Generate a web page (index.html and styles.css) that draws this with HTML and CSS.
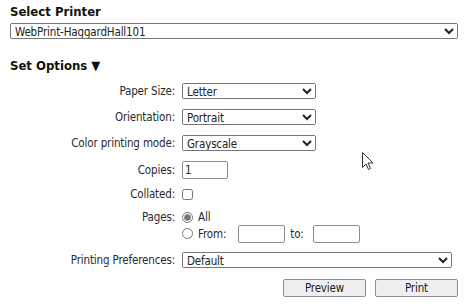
FILE: index.html
```html
<!DOCTYPE html>
<html lang="en">
<head>
  <meta charset="UTF-8">
  <title>WebPrint</title>
  <link rel="stylesheet" href="styles.css">
</head>
<body>
  <h2 class="section-title">Select Printer</h2>
  <select class="printer-select">
    <option>WebPrint-HaggardHall101</option>
  </select>

  <h2 class="section-title options-title">Set Options &#9660;</h2>

  <div class="options">
    <label class="opt-label">Paper Size:</label>
    <div class="opt-field">
      <select class="small-select">
        <option>Letter</option>
        <option>Legal</option>
      </select>
    </div>

    <label class="opt-label">Orientation:</label>
    <div class="opt-field">
      <select class="small-select">
        <option>Portrait</option>
        <option>Landscape</option>
      </select>
    </div>

    <label class="opt-label">Color printing mode:</label>
    <div class="opt-field">
      <select class="small-select">
        <option>Grayscale</option>
        <option>Color</option>
      </select>
    </div>

    <label class="opt-label">Copies:</label>
    <div class="opt-field">
      <input type="text" class="copies" value="1">
    </div>

    <label class="opt-label">Collated:</label>
    <div class="opt-field">
      <input type="checkbox" class="check">
    </div>

    <label class="opt-label pages-label">Pages:</label>
    <div class="opt-field pages">
      <div class="page-line first">
        <input type="radio" name="pages" class="radio" checked> <span>All</span>
      </div>
      <div class="page-line">
        <input type="radio" name="pages" class="radio"> <span>From:</span>
        <input type="text" class="range">
        <span class="to">to:</span>
        <input type="text" class="range to-range">
      </div>
    </div>

    <label class="opt-label">Printing Preferences:</label>
    <div class="opt-field">
      <select class="wide-select">
        <option>Default</option>
      </select>
    </div>
  </div>

  <div class="actions">
    <button class="btn">Preview</button>
    <button class="btn">Print</button>
  </div>

  <svg class="cursor" width="12" height="19" viewBox="0 0 12 19">
    <path d="M0.5 0.5 L0.5 15.5 L4 12 L6.5 17.5 L8.5 16.5 L6 11 L11 11 Z" fill="#fff" stroke="#333" stroke-width="1"/>
  </svg>
</body>
</html>
```

FILE: styles.css
```css
body {
  margin: 0;
  padding: 4px 16px 0 10px;
  font-family: "DejaVu Sans Condensed", Tahoma, "DejaVu Sans", sans-serif;
  font-stretch: condensed;
  font-size: 11.5px;
  letter-spacing: -0.15px;
  color: #2a2a2a;
  background: #fff;
  position: relative;
  height: 300px;
}

.section-title {
  font-size: 13px;
  line-height: 15px;
  font-weight: bold;
  letter-spacing: 0;
  margin: 0 0 4px;
  color: #111;
}

.options-title {
  margin-top: 19px;
  margin-bottom: 10px;
}

select, input, button {
  font-family: inherit;
  font-stretch: condensed;
  font-size: 11.5px;
  letter-spacing: -0.15px;
  color: #222;
  accent-color: #777;
}

.printer-select {
  display: block;
  width: 448px;
  height: 16px;
}

.options {
  display: grid;
  grid-template-columns: 165px auto;
  grid-template-rows: 16px 16px 16px 18px 10px 33px 16px;
  column-gap: 7px;
  row-gap: 10px;
}

.opt-label {
  text-align: right;
  display: flex;
  align-items: center;
  justify-content: flex-end;
}

.opt-field {
  display: flex;
  align-items: center;
}

.small-select {
  width: 134px;
  height: 16px;
}

.wide-select {
  width: 270px;
  height: 16px;
}

.copies {
  width: 40px;
  height: 14px;
  padding: 1px 2px;
  margin: 0;
  border: 1px solid #8d8d8d;
  border-radius: 2px;
}

.check {
  margin: 0;
  width: 11px;
  height: 11px;
}

.pages {
  flex-direction: column;
  align-items: flex-start;
}

.pages-label {
  align-items: flex-start;
  line-height: 16px;
}

.page-line {
  display: flex;
  align-items: center;
  gap: 5px;
  height: 17px;
}

.page-line.first {
  height: 16px;
}

.radio {
  margin: 0;
  width: 11px;
  height: 11px;
}

.range {
  width: 41px;
  height: 14px;
  padding: 1px 2px;
  margin: 0 0 0 7px;
  border: 1px solid #8d8d8d;
  border-radius: 2px;
}

.to-range {
  margin-left: 4px;
}

.actions {
  display: flex;
  gap: 9px;
  margin: 11px 0 0 273px;
}

.btn {
  width: 84px;
  height: 18px;
  padding: 0;
  background: #efefef;
  border: 1px solid #8f8f8f;
  border-radius: 2px;
}

.cursor {
  position: absolute;
  left: 362px;
  top: 152px;
}
```
